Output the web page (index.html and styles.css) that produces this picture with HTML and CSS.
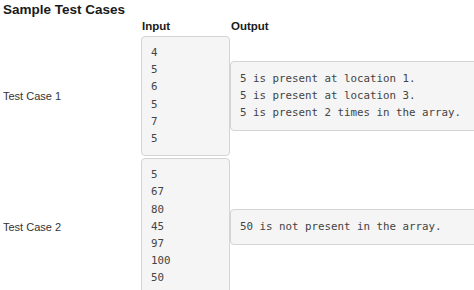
FILE: index.html
```html
<!DOCTYPE html>
<html>
<head>
<meta charset="utf-8">
<link rel="stylesheet" href="styles.css">
</head>
<body>
<div class="page">
  <h2 class="title">Sample Test Cases</h2>
  <div class="cases">
    <div class="head"></div>
    <div class="head">Input</div>
    <div class="head">Output</div>

    <div class="label">Test Case 1</div>
    <pre class="box input">4
5
6
5
7
5</pre>
    <pre class="box output">5 is present at location 1.
5 is present at location 3.
5 is present 2 times in the array.</pre>

    <div class="label">Test Case 2</div>
    <pre class="box input">5
67
80
45
97
100
50</pre>
    <pre class="box output">50 is not present in the array.</pre>
  </div>
</div>
</body>
</html>
```
FILE: styles.css
```css
html, body {
  margin: 0;
  padding: 0;
  overflow: hidden;
  background: #fff;
}

.page {
  font-family: "Liberation Sans", Arial, sans-serif;
  color: #222;
  width: 480px;
}

.title {
  margin: 0;
  padding: 1px 0 0 3px;
  font-size: 13.5px;
  font-weight: bold;
  line-height: 17px;
  color: #1a1a1a;
}

.cases {
  display: grid;
  grid-template-columns: 141px 89px 1fr;
  row-gap: 2px;
  align-items: center;
}

.head {
  font-size: 11.5px;
  font-weight: bold;
  line-height: 15px;
  padding: 1px 0 0 1px;
  color: #1a1a1a;
  align-self: end;
}

.label {
  font-size: 11px;
  color: #333;
  padding-left: 3px;
}

.box {
  margin: 0;
  background: #f5f5f5;
  border: 1px solid #d4d4d4;
  border-radius: 4px;
  font-family: "DejaVu Sans Mono", "Liberation Mono", monospace;
  font-size: 10.8px;
  line-height: 17.2px;
  color: #444;
  white-space: pre;
}

.input {
  padding: 7px 9px 8px;
}

.output {
  padding: 7.5px 9px 8.5px;
  margin-right: -10px;
}
```
